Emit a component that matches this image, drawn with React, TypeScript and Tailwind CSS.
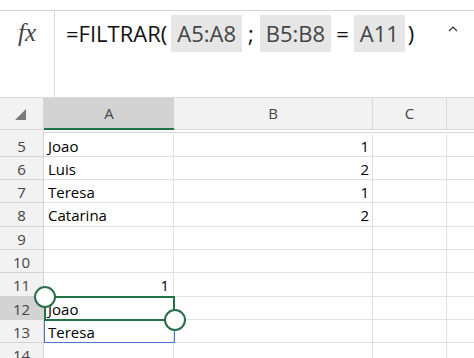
import React from 'react';

const rows: { n: number; a?: string; aRight?: boolean; b?: string; h: string }[] = [
  { n: 5, a: 'Joao', b: '1', h: 'h-[23px]' },
  { n: 6, a: 'Luis', b: '2', h: 'h-[23px]' },
  { n: 7, a: 'Teresa', b: '1', h: 'h-[23px]' },
  { n: 8, a: 'Catarina', b: '2', h: 'h-[24px]' },
  { n: 9, h: 'h-[23px]' },
  { n: 10, h: 'h-[23px]' },
  { n: 11, a: '1', aRight: true, h: 'h-[24px]' },
  { n: 12, a: 'Joao', h: 'h-[23px]' },
  { n: 13, a: 'Teresa', h: 'h-[23px]' },
  { n: 14, h: 'h-[23px]' },
];

const Ref = ({ children }: { children: React.ReactNode }) => (
  <span className="bg-[#e6e6e6] h-[37px] px-[6px] flex items-center text-[#444]">{children}</span>
);

export default function App() {
  return (
    <div
      className="w-[474px] h-[358px] overflow-hidden bg-white relative"
      style={{ fontFamily: '"Open Sans", "Noto Sans", sans-serif' }}
    >
      {/* formula bar */}
      <div className="mt-[10px] h-[87px] border-t border-[#d4d4d4] flex">
        <div className="w-[55px] border-r border-[#d9d9d9] flex justify-center pt-[8px]">
          <span
            className="italic text-[25px] text-[#444] leading-none mt-[1px]"
            style={{ fontFamily: '"Liberation Serif", serif' }}
          >
            fx
          </span>
        </div>
        <div className="flex-1 flex items-start pt-[4px] pl-[11px] text-[22px] text-[#111]">
          <div className="flex items-center h-[37px]">
            <span className="mr-[4px]">=FILTRAR(</span>
            <Ref>A5:A8</Ref>
            <span className="mx-[6px]">;</span>
            <Ref>B5:B8</Ref>
            <span className="mx-[5px]">=</span>
            <Ref>A11</Ref>
            <span className="ml-[3px]">)</span>
          </div>
          <div className="ml-auto mr-[15px] mt-[10px]">
            <svg width="12" height="8" viewBox="0 0 12 8">
              <path d="M2 6 L6 2 L10 6" fill="none" stroke="#333" strokeWidth="1.2" />
            </svg>
          </div>
        </div>
      </div>

      {/* grid */}
      <div className="relative text-[15px]">
        {/* header */}
        <div className="flex h-[33px] bg-[#f2f2f2] border-t border-[#dadada] text-[#444]">
          <div className="w-[44px] border-r border-b border-[#d4d4d4] flex items-end justify-end pr-[17px] pb-[9px]">
            <svg width="11" height="11" viewBox="0 0 11 11">
              <path d="M11 0 L11 11 L0 11 Z" fill="#7a7a7a" />
            </svg>
          </div>
          <div className="w-[130px] bg-[#d3d3d3] border-b-2 border-[#217346] flex items-center justify-center">A</div>
          <div className="w-[199px] border-r border-b border-[#d9d9d9] flex items-center justify-center">B</div>
          <div className="w-[74px] border-r border-b border-[#d9d9d9] flex items-center justify-center">C</div>
          <div className="flex-1 border-b border-[#d9d9d9]" />
        </div>
        <div className="h-[4px] flex">
          <div className="w-[44px] bg-[#f2f2f2] border-r border-[#d4d4d4]" />
          <div className="flex-1" />
        </div>
        <div className="h-px bg-[#d6d6d6] -mt-[2px] mb-[1px]" />

        {rows.map((r) => (
          <div key={r.n} className={`flex ${r.h} text-black`}>
            <div
              className={`w-[44px] border-r border-b border-[#d4d4d4] flex items-center justify-center text-[#444] pt-[2px] ${
                r.n === 12 ? 'bg-[#d3d3d3]' : 'bg-[#f2f2f2]'
              }`}
            >
              {r.n}
            </div>
            <div
              className={`w-[130px] border-r border-b border-[#e1e1e1] flex items-center px-[4px] pt-[2px] ${
                r.aRight ? 'justify-end' : ''
              }`}
            >
              {r.a}
            </div>
            <div className="w-[199px] border-r border-b border-[#e1e1e1] flex items-center justify-end px-[3px] pt-[2px]">
              {r.b}
            </div>
            <div className="w-[74px] border-r border-b border-[#e1e1e1]" />
            <div className="flex-1 border-b border-[#e1e1e1]" />
          </div>
        ))}

        {/* selection overlays */}
        <div className="absolute left-[44px] top-[222px] w-[131px] h-[24px] border border-[#4a76c9]" />
        <div className="absolute left-[44px] top-[199px] w-[131px] h-[25px] border-2 border-[#217346]" />
        <div className="absolute left-[34px] top-[189px] w-[22px] h-[22px] rounded-full bg-white border-2 border-[#2b6e49]" />
        <div className="absolute left-[164px] top-[212px] w-[22px] h-[22px] rounded-full bg-white border-2 border-[#2b6e49]" />
      </div>
    </div>
  );
}
